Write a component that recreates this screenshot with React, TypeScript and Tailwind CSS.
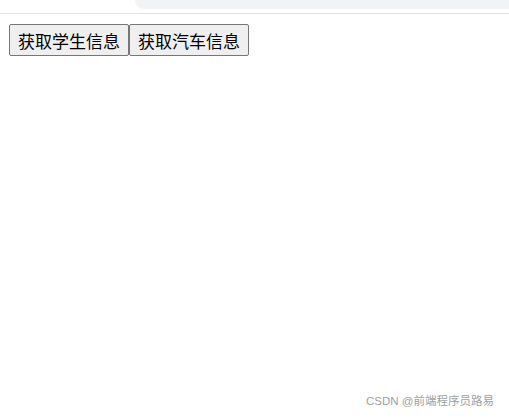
import React from 'react';

export default function App() {
  return (
    <div className="relative w-[509px] h-[418px] bg-white overflow-hidden" style={{ fontFamily: '"Noto Sans CJK SC", sans-serif' }}>
      {/* browser chrome remnant */}
      <div className="h-[14px] flex justify-end border-b border-[#e3e3e3]">
        <div className="w-[374px] h-[9px] bg-[#f1f3f4] rounded-bl-[12px]" />
      </div>

      <div className="flex pl-[9px] pt-[10px]">
        <button className="h-[32px] px-[8px] text-[17px] leading-none text-black bg-[#efefef] border border-[#767676] rounded-[2px]">
          获取学生信息
        </button>
        <button className="h-[32px] px-[8px] text-[17px] leading-none text-black bg-[#efefef] border border-[#767676] rounded-[2px]">
          获取汽车信息
        </button>
      </div>

      {/* watermark */}
      <div
        className="absolute right-[15px] bottom-[8px] text-[11.5px] text-[#a0a0a0]"
        style={{ fontFamily: '"Liberation Sans", "Noto Sans CJK SC", sans-serif' }}
      >
        CSDN @前端程序员路易
      </div>
    </div>
  );
}
